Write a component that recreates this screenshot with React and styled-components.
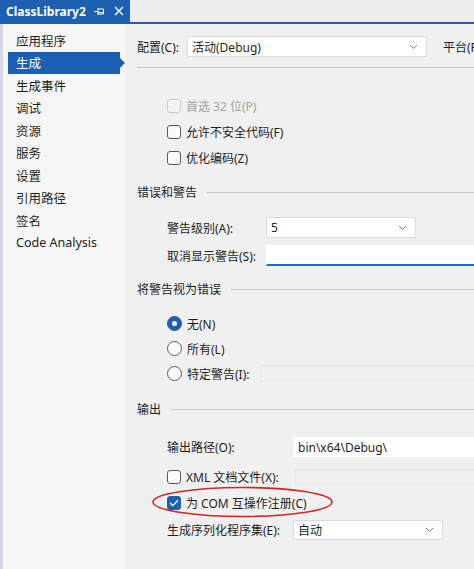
import styled, { createGlobalStyle } from 'styled-components';

const GlobalStyle = createGlobalStyle`
  html, body {
    margin: 0;
    padding: 0;
    background: #f0f0f0;
  }
  body {
    font-family: "Noto Sans", "Noto Sans CJK SC", sans-serif;
    font-size: 12px;
    color: #1e1e1e;
  }
`;

const Page = styled.div`
  width: 474px;
  height: 569px;
  overflow: hidden;
  display: flex;
  flex-direction: column;
  background: #f0f0f0;
`;

// tab strip
const TabStrip = styled.div`
  display: flex;
  height: 22px;
  background: #eeeef2;
  border-bottom: 2px solid #1d5fb0;
`;

const Tab = styled.div`
  display: flex;
  align-items: center;
  width: 130px;
  padding-left: 6px;
  padding-right: 2px;
  box-sizing: border-box;
  background: #1d5fb0;
  color: #fff;
  font-weight: 700;
  font-size: 12px;
`;

const TabTitle = styled.span`
  flex: 1;
  white-space: nowrap;
`;

const TabIcon = styled.span`
  display: flex;
  align-items: center;
  justify-content: center;
  width: 19px;
  height: 18px;
`;

const Body = styled.div`
  flex: 1;
  display: flex;
  min-height: 0;
`;

// side menu
const Sidebar = styled.div`
  width: 125px;
  flex: 0 0 125px;
  box-sizing: border-box;
  background: #f6f6f6;
  border-left: 3px solid #d6d6e4;
  padding-top: 5px;
  padding-left: 5px;
`;

const MenuItem = styled.div`
  position: relative;
  height: 22.5px;
  display: flex;
  align-items: center;
  padding-left: 8px;
  margin-right: 5px;
  white-space: nowrap;
  font-size: 12.5px;
  background: ${p => (p.$active ? '#1c60b3' : 'transparent')};
  color: ${p => (p.$active ? '#fff' : '#1e1e1e')};

  &::after {
    content: '';
    display: ${p => (p.$active ? 'block' : 'none')};
    position: absolute;
    right: -5px;
    top: 50%;
    transform: translateY(-50%);
    border-left: 5px solid #1c60b3;
    border-top: 5px solid transparent;
    border-bottom: 5px solid transparent;
  }
`;

// content area
const Content = styled.div`
  flex: 1;
  min-width: 0;
  padding: 12px 0 0 12px;
  display: flex;
  flex-direction: column;
`;

const Row = styled.div`
  position: relative;
  display: flex;
  align-items: center;
  height: ${p => p.$h || 25}px;
  margin-top: ${p => p.$mt || 0}px;
  padding-left: ${p => (p.$indent ? 30 : 0)}px;
  white-space: nowrap;
`;

const Label = styled.span`
  width: ${p => (p.$w ? `${p.$w}px` : 'auto')};
  flex: 0 0 auto;
  color: ${p => (p.$disabled ? '#a3a3a3' : '#1e1e1e')};
`;

const PlatformLabel = styled(Label)`
  margin-left: 16px;
`;

const Rule = styled.div`
  height: 1px;
  background: #c9c9c9;
  margin-top: ${p => p.$mt || 0}px;
`;

const SectionTitle = styled.div`
  display: flex;
  align-items: center;
  height: 20px;
  margin-top: ${p => p.$mt || 0}px;
  white-space: nowrap;

  &::after {
    content: '';
    flex: 1;
    height: 1px;
    background: #c9c9c9;
    margin-left: 10px;
  }
`;

const SelectBox = styled.div`
  display: flex;
  align-items: center;
  justify-content: space-between;
  box-sizing: border-box;
  width: ${p => p.$w}px;
  height: ${p => p.$h || 21}px;
  padding: 0 8px 0 4px;
  background: #fff;
  border: 1px solid #dadada;
  flex: 0 0 auto;
`;

const TextBox = styled.div`
  display: flex;
  align-items: center;
  box-sizing: border-box;
  flex: 1;
  height: ${p => p.$h || 21}px;
  padding-left: 4px;
  background: ${p => (p.$disabled ? '#efefef' : '#fff')};
  border: 1px solid ${p => (p.$disabled ? '#e6e6e6' : '#fff')};
  border-bottom: ${p => (p.$focused ? '2px solid #1f6fc8' : `1px solid ${p.$disabled ? '#e6e6e6' : '#fff'}`)};
  border-right: none;
`;

const Check = styled.span`
  display: inline-flex;
  align-items: center;
  justify-content: center;
  box-sizing: border-box;
  width: 14px;
  height: 14px;
  border-radius: 3px;
  margin-right: 5px;
  flex: 0 0 auto;
  border: 1px solid ${p => (p.$checked ? '#1c60b3' : p.$disabled ? '#cdcdcd' : '#5a5a5a')};
  background: ${p => (p.$checked ? '#1c60b3' : p.$disabled ? '#f3f3f3' : '#fbfbfb')};
`;

const Radio = styled.span`
  display: inline-flex;
  align-items: center;
  justify-content: center;
  box-sizing: border-box;
  width: 15px;
  height: 15px;
  border-radius: 50%;
  margin-right: 5px;
  flex: 0 0 auto;
  border: 1px solid ${p => (p.$checked ? '#1c60b3' : '#5a5a5a')};
  background: ${p => (p.$checked ? '#1c60b3' : '#fbfbfb')};

  &::after {
    content: '';
    display: ${p => (p.$checked ? 'block' : 'none')};
    width: 5px;
    height: 5px;
    border-radius: 50%;
    background: #fff;
  }
`;

const Marker = styled.div`
  position: absolute;
  left: 15px;
  top: -5px;
  width: 181px;
  height: 32px;
  pointer-events: none;
`;

const Chevron = () => (
  <svg width="9" height="6" viewBox="0 0 9 6">
    <path d="M1 1 L4.5 4.5 L8 1" fill="none" stroke="#7a7a7a" strokeWidth="1" />
  </svg>
);

const Tick = () => (
  <svg width="10" height="8" viewBox="0 0 10 8">
    <path d="M1 4 L3.8 6.6 L9 1.2" fill="none" stroke="#fff" strokeWidth="1.3" />
  </svg>
);

const menu = ['应用程序', '生成', '生成事件', '调试', '资源', '服务', '设置', '引用路径', '签名', 'Code Analysis'];

export default function App() {
  return (
    <Page>
      <GlobalStyle />
      <TabStrip>
        <Tab>
          <TabTitle>ClassLibrary2</TabTitle>
          <TabIcon>
            <svg width="11" height="9" viewBox="0 0 11 9">
              <path d="M0 4.5 H4 M4 1 V8 M4 2 H9.5 V7 H4 M4 5.5 H9.5" fill="none" stroke="#fff" strokeWidth="1" />
            </svg>
          </TabIcon>
          <TabIcon>
            <svg width="10" height="10" viewBox="0 0 10 10">
              <path d="M1 1 L9 9 M9 1 L1 9" stroke="#fff" strokeWidth="1.4" />
            </svg>
          </TabIcon>
        </Tab>
      </TabStrip>

      <Body>
        <Sidebar>
          {menu.map((m, i) => (
            <MenuItem key={m} $active={i === 1}>{m}</MenuItem>
          ))}
        </Sidebar>

        <Content>
          <Row $h={21}>
            <Label $w={50}>配置(C):</Label>
            <SelectBox $w={240}>
              <span>活动(Debug)</span>
              <Chevron />
            </SelectBox>
            <PlatformLabel>平台(P):</PlatformLabel>
          </Row>
          <Rule $mt={10} />

          <Row $indent $h={26} $mt={25}>
            <Check $disabled />
            <Label $disabled>首选 32 位(P)</Label>
          </Row>
          <Row $indent $h={26}>
            <Check />
            <Label>允许不安全代码(F)</Label>
          </Row>
          <Row $indent $h={26}>
            <Check />
            <Label>优化编码(Z)</Label>
          </Row>

          <SectionTitle $mt={11}>错误和警告</SectionTitle>
          <Row $indent $h={21} $mt={15}>
            <Label $w={99}>警告级别(A):</Label>
            <SelectBox $w={150}>
              <span>5</span>
              <Chevron />
            </SelectBox>
          </Row>
          <Row $indent $h={21} $mt={7}>
            <Label $w={99}>取消显示警告(S):</Label>
            <TextBox $focused />
          </Row>

          <SectionTitle $mt={13}>将警告视为错误</SectionTitle>
          <Row $indent $h={25} $mt={12}>
            <Radio $checked />
            <Label>无(N)</Label>
          </Row>
          <Row $indent $h={25}>
            <Radio />
            <Label>所有(L)</Label>
          </Row>
          <Row $indent $h={25}>
            <Radio />
            <Label $w={73}>特定警告(I):</Label>
            <TextBox $disabled $h={17} />
          </Row>

          <SectionTitle $mt={13}>输出</SectionTitle>
          <Row $indent $h={20} $mt={18}>
            <Label $w={126}>输出路径(O):</Label>
            <TextBox $h={20}>bin\x64\Debug\</TextBox>
          </Row>
          <Row $indent $h={24} $mt={8}>
            <Check />
            <Label $w={109}>XML 文档文件(X):</Label>
            <TextBox $disabled $h={17} />
          </Row>
          <Row $indent $h={24} $mt={2}>
            <Check $checked><Tick /></Check>
            <Label>为 COM 互操作注册(C)</Label>
            <Marker>
              <svg width="181" height="32" viewBox="0 0 181 32">
                <ellipse cx="90.5" cy="16" rx="89.5" ry="14.5" fill="none" stroke="#d62323" strokeWidth="1.6" />
              </svg>
            </Marker>
          </Row>
          <Row $indent $h={20} $mt={5}>
            <Label $w={126}>生成序列化程序集(E):</Label>
            <SelectBox $w={150} $h={20}>
              <span>自动</span>
              <Chevron />
            </SelectBox>
          </Row>
        </Content>
      </Body>
    </Page>
  );
}
